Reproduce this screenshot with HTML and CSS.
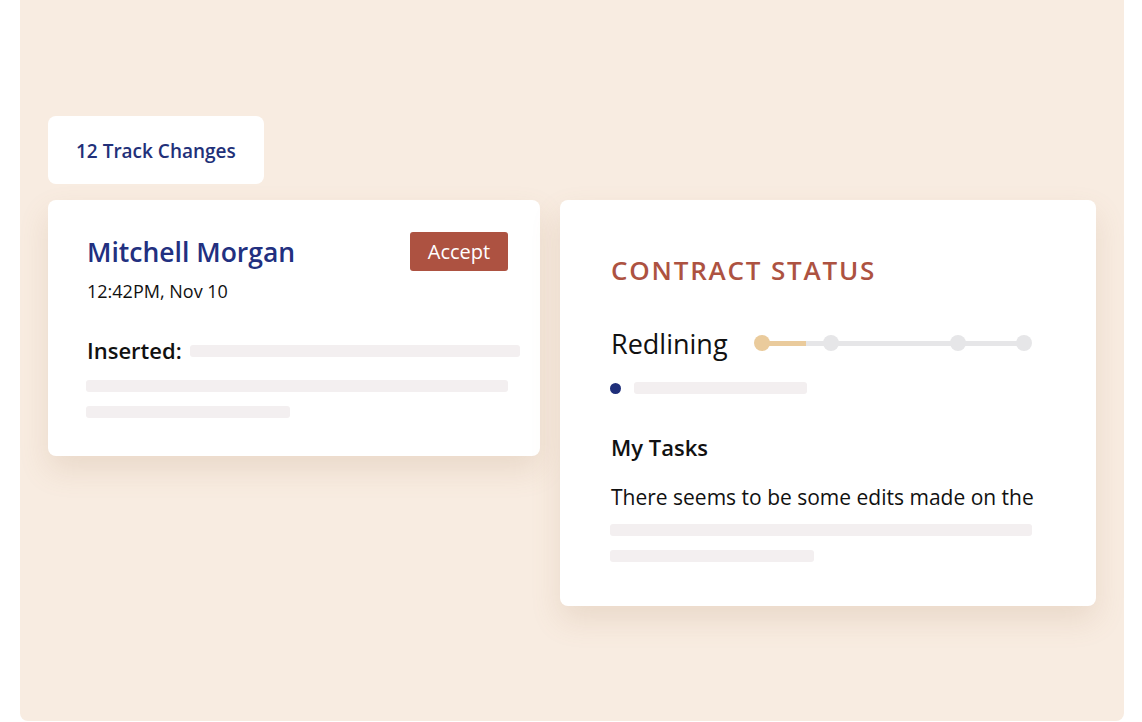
FILE: index.html
```html
<!DOCTYPE html>
<html>
<head>
<meta charset="utf-8">
<link rel="stylesheet" href="styles.css">
</head>
<body>
<div class="panel">
  <div class="grid">
    <div class="tag">12 Track Changes</div>
    <div class="spacer"></div>
    <div class="card change">
      <div class="change-head">
        <div>
          <div class="name">Mitchell Morgan</div>
          <div class="time">12:42PM, Nov 10</div>
        </div>
        <div class="accept">Accept</div>
      </div>
      <div class="inserted">
        <span class="label">Inserted:</span>
        <span class="bar bar-fill"></span>
      </div>
      <div class="bar bar-full"></div>
      <div class="bar bar-short"></div>
    </div>
    <div class="card status">
      <div class="title">CONTRACT STATUS</div>
      <div class="stage">
        <span class="stage-name">Redlining</span>
        <div class="track">
          <span class="track-done"></span>
          <span class="dot dot-done"></span>
          <span class="dot dot-2"></span>
          <span class="dot dot-3"></span>
          <span class="dot dot-4"></span>
        </div>
      </div>
      <div class="legend">
        <span class="legend-dot"></span>
        <span class="bar bar-legend"></span>
      </div>
      <div class="tasks">My Tasks</div>
      <div class="task-text">There seems to be some edits made on the</div>
      <div class="bar bar-task"></div>
      <div class="bar bar-task-short"></div>
    </div>
  </div>
</div>
</body>
</html>
```
FILE: styles.css
```css
* { box-sizing: border-box; }
html, body { margin: 0; padding: 0; background: #ffffff; }
body {
  width: 1142px;
  height: 722px;
  overflow: hidden;
  font-family: "Open Sans", "Noto Sans", sans-serif;
  color: #111111;
}
.panel {
  margin-left: 20px;
  width: 1104px;
  height: 721px;
  background: #F8ECE1;
  border-radius: 0 0 8px 8px;
  padding: 116px 0 0 28px;
}
.grid {
  display: grid;
  grid-template-columns: 492px 536px;
  grid-template-rows: 68px auto;
  column-gap: 20px;
  row-gap: 16px;
  align-items: start;
}
.tag {
  width: 216px;
  height: 68px;
  background: #fff;
  border-radius: 8px;
  display: flex;
  align-items: center;
  padding-left: 28px;
  padding-top: 2px;
  font-size: 19px;
  font-weight: 600;
  color: #223079;
}
.card {
  background: #fff;
  border-radius: 8px;
  box-shadow: 0 14px 30px rgba(160, 120, 80, 0.16);
}
.change {
  height: 256px;
  padding: 32px 32px 0 39px;
}
.change-head {
  display: flex;
  justify-content: space-between;
  align-items: flex-start;
}
.name {
  font-size: 26.5px;
  font-weight: 600;
  color: #223080;
  line-height: 40px;
}
.time {
  font-size: 18px;
  line-height: 24px;
  margin-top: 7px;
}
.accept {
  width: 98px;
  height: 39px;
  background: #AD5241;
  color: #fff;
  border-radius: 3px;
  font-size: 20px;
  display: flex;
  align-items: center;
  justify-content: center;
}
.inserted {
  display: flex;
  align-items: center;
  margin-top: 33px;
  height: 28px;
  margin-right: -12px;
}
.label {
  font-size: 22px;
  font-weight: 600;
  margin-right: 8px;
}
.bar {
  display: block;
  height: 12px;
  background: #F3EFF0;
  border-radius: 3px;
}
.bar-fill { flex: 1; margin-top: 2px; }
.bar-full { width: 422px; margin-top: 16px; margin-left: -1px; }
.bar-short { width: 204px; margin-top: 14px; margin-left: -1px; }

.status {
  height: 406px;
  padding: 52px 40px 0 51px;
}
.title {
  font-size: 26px;
  font-weight: 600;
  color: #AD5241;
  line-height: 36px;
  letter-spacing: 1.8px;
}
.stage {
  display: flex;
  align-items: center;
  margin-top: 38px;
  height: 34px;
}
.stage-name {
  font-size: 27px;
  width: 143px;
}
.track {
  position: relative;
  width: 278px;
  height: 16px;
}
.track::before {
  content: "";
  position: absolute;
  left: 8px;
  right: 8px;
  top: 6px;
  height: 5px;
  background: #E6E6E8;
}
.track-done {
  position: absolute;
  left: 8px;
  width: 44px;
  top: 6px;
  height: 5px;
  background: #EACB9C;
}
.dot {
  position: absolute;
  top: 0;
  width: 16px;
  height: 16px;
  border-radius: 50%;
  background: #E6E6E8;
}
.dot-done { left: 0; background: #EACB9C; }
.dot-2 { left: 69px; }
.dot-3 { left: 196px; }
.dot-4 { left: 262px; }
.legend {
  display: flex;
  align-items: center;
  margin-top: 20px;
  height: 16px;
}
.legend-dot {
  width: 11px;
  height: 11px;
  border-radius: 50%;
  background: #1F2F7A;
  margin-left: -1px;
  margin-right: 13px;
}
.bar-legend { width: 173px; }
.tasks {
  margin-top: 36px;
  font-size: 22px;
  font-weight: 600;
  line-height: 30px;
}
.task-text {
  margin-top: 22px;
  font-size: 21px;
  line-height: 26px;
  white-space: nowrap;
}
.bar-task { width: 422px; margin-top: 14px; margin-left: -1px; }
.bar-task-short { width: 204px; margin-top: 14px; margin-left: -1px; }
```
